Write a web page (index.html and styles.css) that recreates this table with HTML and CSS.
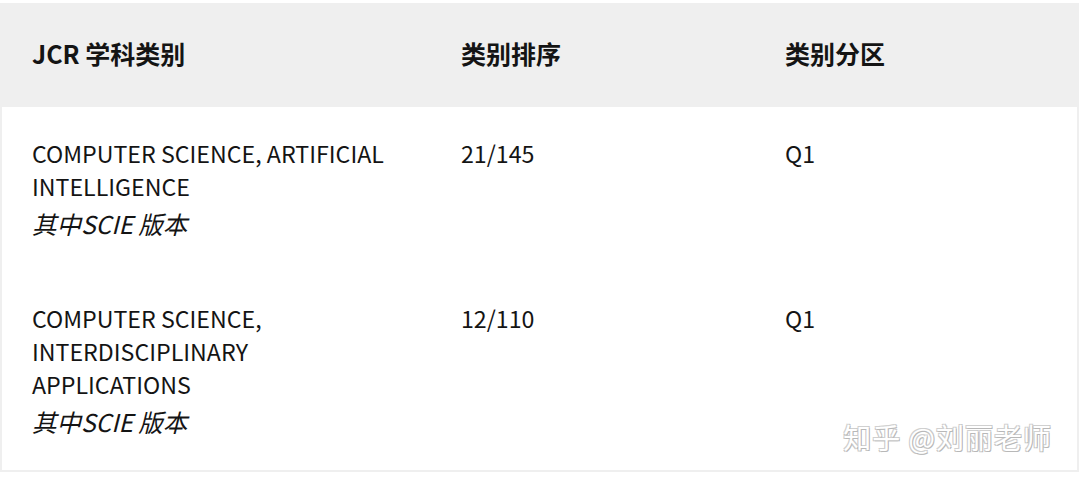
FILE: index.html
```html
<!DOCTYPE html>
<html lang="zh">
<head>
<meta charset="utf-8">
<link rel="stylesheet" href="styles.css">
</head>
<body>
<div class="wrap">
  <table class="jcr">
    <colgroup>
      <col class="c1"><col class="c2"><col class="c3">
    </colgroup>
    <thead>
      <tr><th>JCR 学科类别</th><th>类别排序</th><th>类别分区</th></tr>
    </thead>
    <tbody>
      <tr>
        <td>COMPUTER SCIENCE, ARTIFICIAL INTELLIGENCE<em>其中SCIE 版本</em></td>
        <td>21/145</td>
        <td>Q1</td>
      </tr>
      <tr>
        <td>COMPUTER SCIENCE, INTERDISCIPLINARY APPLICATIONS<em>其中SCIE 版本</em></td>
        <td>12/110</td>
        <td>Q1</td>
      </tr>
    </tbody>
  </table>
  <div class="watermark">知乎 @刘丽老师</div>
</div>
</body>
</html>
```
FILE: styles.css
```css
html, body {
  margin: 0;
  padding: 0;
  background: #ffffff;
}
body {
  font-family: "Noto Sans CJK SC", "Noto Sans", sans-serif;
  color: #141414;
}
.wrap {
  position: relative;
  width: 1080px;
  padding-top: 3px;
}
.jcr {
  width: 1079px;
  border-collapse: collapse;
  table-layout: fixed;
  border-left: 2px solid #efefef;
  border-right: 2px solid #efefef;
  border-bottom: 2px solid #efefef;
}
.c1 { width: 430px; }
.c2 { width: 324px; }
.c3 { width: auto; }
.jcr th {
  background: #efefef;
  text-align: left;
  font-weight: 700;
  font-size: 25px;
  line-height: 33px;
  padding: 34px 30px 37px 30px;
  vertical-align: top;
}
.jcr td {
  font-size: 23.2px;
  line-height: 33px;
  padding: 30px 30px 32px 30px;
  vertical-align: top;
}
.jcr em {
  display: block;
  margin-top: 4px;
  font-size: 24.5px;
  font-style: italic;
}
.watermark {
  position: absolute;
  right: 28px;
  bottom: 15px;
  font-size: 28px;
  color: #ffffff;
  letter-spacing: 1px;
  text-shadow: 1px 1px 0 #b8b8b8, -1px -1px 0 #d0d0d0, 1px -1px 0 #cccccc, -1px 1px 0 #c8c8c8;
}
```
